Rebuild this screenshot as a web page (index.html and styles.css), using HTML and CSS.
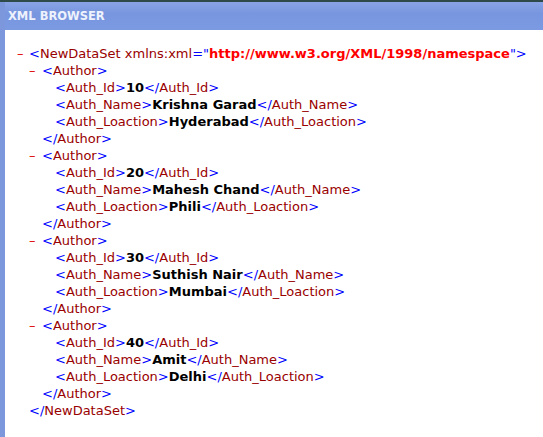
FILE: index.html
```html
<!DOCTYPE html>
<html lang="en">
<head>
    <meta http-equiv="Content-Type" content="text/html; charset=utf-8"/>
    <link rel="stylesheet" href="styles.css">
</head>
<body>
<div class="desk"></div>
<div class="window">
    <div class="title">XML BROWSER</div>
    <div class="page">
        <div class="line"><span class="m">–</span><span class="t">&lt;</span><span class="n">NewDataSet</span> <span class="n">xmlns:xml</span><span class="t">="</span><span class="v">http://www.w3.org/XML/1998/namespace</span><span class="t">"&gt;</span></div>
        <div class="kids">
            <div class="line"><span class="m sub">–</span><span class="t">&lt;</span><span class="n">Author</span><span class="t">&gt;</span></div>
            <div class="leafs">
                <div class="line"><span class="t">&lt;</span><span class="n">Auth_Id</span><span class="t">&gt;</span><b>10</b><span class="t">&lt;/</span><span class="n">Auth_Id</span><span class="t">&gt;</span></div>
                <div class="line"><span class="t">&lt;</span><span class="n">Auth_Name</span><span class="t">&gt;</span><b>Krishna Garad</b><span class="t">&lt;/</span><span class="n">Auth_Name</span><span class="t">&gt;</span></div>
                <div class="line"><span class="t">&lt;</span><span class="n">Auth_Loaction</span><span class="t">&gt;</span><b>Hyderabad</b><span class="t">&lt;/</span><span class="n">Auth_Loaction</span><span class="t">&gt;</span></div>
            </div>
            <div class="line end"><span class="t">&lt;/</span><span class="n">Author</span><span class="t">&gt;</span></div>

            <div class="line"><span class="m sub">–</span><span class="t">&lt;</span><span class="n">Author</span><span class="t">&gt;</span></div>
            <div class="leafs">
                <div class="line"><span class="t">&lt;</span><span class="n">Auth_Id</span><span class="t">&gt;</span><b>20</b><span class="t">&lt;/</span><span class="n">Auth_Id</span><span class="t">&gt;</span></div>
                <div class="line"><span class="t">&lt;</span><span class="n">Auth_Name</span><span class="t">&gt;</span><b>Mahesh Chand</b><span class="t">&lt;/</span><span class="n">Auth_Name</span><span class="t">&gt;</span></div>
                <div class="line"><span class="t">&lt;</span><span class="n">Auth_Loaction</span><span class="t">&gt;</span><b>Phili</b><span class="t">&lt;/</span><span class="n">Auth_Loaction</span><span class="t">&gt;</span></div>
            </div>
            <div class="line end"><span class="t">&lt;/</span><span class="n">Author</span><span class="t">&gt;</span></div>

            <div class="line"><span class="m sub">–</span><span class="t">&lt;</span><span class="n">Author</span><span class="t">&gt;</span></div>
            <div class="leafs">
                <div class="line"><span class="t">&lt;</span><span class="n">Auth_Id</span><span class="t">&gt;</span><b>30</b><span class="t">&lt;/</span><span class="n">Auth_Id</span><span class="t">&gt;</span></div>
                <div class="line"><span class="t">&lt;</span><span class="n">Auth_Name</span><span class="t">&gt;</span><b>Suthish Nair</b><span class="t">&lt;/</span><span class="n">Auth_Name</span><span class="t">&gt;</span></div>
                <div class="line"><span class="t">&lt;</span><span class="n">Auth_Loaction</span><span class="t">&gt;</span><b>Mumbai</b><span class="t">&lt;/</span><span class="n">Auth_Loaction</span><span class="t">&gt;</span></div>
            </div>
            <div class="line end"><span class="t">&lt;/</span><span class="n">Author</span><span class="t">&gt;</span></div>

            <div class="line"><span class="m sub">–</span><span class="t">&lt;</span><span class="n">Author</span><span class="t">&gt;</span></div>
            <div class="leafs">
                <div class="line"><span class="t">&lt;</span><span class="n">Auth_Id</span><span class="t">&gt;</span><b>40</b><span class="t">&lt;/</span><span class="n">Auth_Id</span><span class="t">&gt;</span></div>
                <div class="line"><span class="t">&lt;</span><span class="n">Auth_Name</span><span class="t">&gt;</span><b>Amit</b><span class="t">&lt;/</span><span class="n">Auth_Name</span><span class="t">&gt;</span></div>
                <div class="line"><span class="t">&lt;</span><span class="n">Auth_Loaction</span><span class="t">&gt;</span><b>Delhi</b><span class="t">&lt;/</span><span class="n">Auth_Loaction</span><span class="t">&gt;</span></div>
            </div>
            <div class="line end"><span class="t">&lt;/</span><span class="n">Author</span><span class="t">&gt;</span></div>
        </div>
        <div class="line close"><span class="t">&lt;/</span><span class="n">NewDataSet</span><span class="t">&gt;</span></div>
    </div>
</div>
</body>
</html>
```

FILE: styles.css
```css
html, body {
    margin: 0;
    height: 100%;
    overflow: hidden;
    background: #ffffff;
}

.desk {
    height: 2px;
    background: #2f4a4a;
}

.window {
    border-left: 5px solid #7d97dc;
    height: 100%;
}

.title {
    height: 28px;
    line-height: 29px;
    padding-left: 3px;
    background: linear-gradient(#8aa4e6, #7896df 40%, #7b9ae2);
    color: #eef2fd;
    font-family: "DejaVu Sans", Verdana, sans-serif;
    font-size: 11.5px;
    font-weight: bold;
}

.page {
    background: #ffffff;
    padding: 15px 0 0 12px;
    font-family: "DejaVu Sans", Verdana, sans-serif;
    font-size: 13px;
    line-height: 17px;
    white-space: nowrap;
}

.kids {
    padding-left: 12px;
}

.leafs {
    padding-left: 26px;
}

.close {
    padding-left: 12px;
}

.end {
    padding-left: 13px;
}

.m {
    display: inline-block;
    width: 12px;
    color: #e00000;
}

.m.sub {
    width: 13px;
}

.t {
    color: #0000ff;
}

.n {
    color: #990000;
}

.v {
    color: #ff0000;
    font-weight: bold;
}

b {
    color: #000000;
}
```
